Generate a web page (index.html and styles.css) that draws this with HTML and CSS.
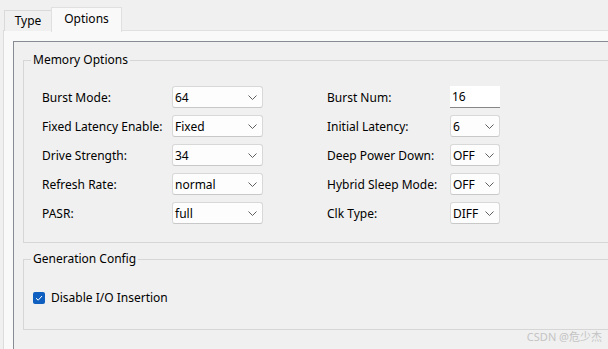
FILE: index.html
```html
<!DOCTYPE html>
<html lang="en">
<head>
    <meta charset="UTF-8">
    <meta name="viewport" content="width=device-width, initial-scale=1.0">
    <title>Options</title>
    <link rel="stylesheet" href="styles.css">
</head>
<body>

    <div class="tabs">
        <div class="tab">Type</div>
        <div class="tab active">Options</div>
    </div>

    <div class="pane">
        <div class="inner">

            <fieldset class="group memory">
                <legend>Memory Options</legend>
                <div class="grid">
                    <span class="label">Burst Mode:</span>
                    <div class="combo wide"><span>64</span><svg width="9" height="5" viewBox="0 0 9 5"><path d="M0.5 0.5 L4.5 4.5 L8.5 0.5" fill="none" stroke="#5f5f5f" stroke-width="1"/></svg></div>
                    <span class="label right">Burst Num:</span>
                    <div class="edit">16</div>

                    <span class="label">Fixed Latency Enable:</span>
                    <div class="combo wide"><span>Fixed</span><svg width="9" height="5" viewBox="0 0 9 5"><path d="M0.5 0.5 L4.5 4.5 L8.5 0.5" fill="none" stroke="#5f5f5f" stroke-width="1"/></svg></div>
                    <span class="label right">Initial Latency:</span>
                    <div class="combo"><span>6</span><svg width="9" height="5" viewBox="0 0 9 5"><path d="M0.5 0.5 L4.5 4.5 L8.5 0.5" fill="none" stroke="#5f5f5f" stroke-width="1"/></svg></div>

                    <span class="label">Drive Strength:</span>
                    <div class="combo wide"><span>34</span><svg width="9" height="5" viewBox="0 0 9 5"><path d="M0.5 0.5 L4.5 4.5 L8.5 0.5" fill="none" stroke="#5f5f5f" stroke-width="1"/></svg></div>
                    <span class="label right">Deep Power Down:</span>
                    <div class="combo"><span>OFF</span><svg width="9" height="5" viewBox="0 0 9 5"><path d="M0.5 0.5 L4.5 4.5 L8.5 0.5" fill="none" stroke="#5f5f5f" stroke-width="1"/></svg></div>

                    <span class="label">Refresh Rate:</span>
                    <div class="combo wide"><span>normal</span><svg width="9" height="5" viewBox="0 0 9 5"><path d="M0.5 0.5 L4.5 4.5 L8.5 0.5" fill="none" stroke="#5f5f5f" stroke-width="1"/></svg></div>
                    <span class="label right">Hybrid Sleep Mode:</span>
                    <div class="combo"><span>OFF</span><svg width="9" height="5" viewBox="0 0 9 5"><path d="M0.5 0.5 L4.5 4.5 L8.5 0.5" fill="none" stroke="#5f5f5f" stroke-width="1"/></svg></div>

                    <span class="label">PASR:</span>
                    <div class="combo wide"><span>full</span><svg width="9" height="5" viewBox="0 0 9 5"><path d="M0.5 0.5 L4.5 4.5 L8.5 0.5" fill="none" stroke="#5f5f5f" stroke-width="1"/></svg></div>
                    <span class="label right">Clk Type:</span>
                    <div class="combo"><span>DIFF</span><svg width="9" height="5" viewBox="0 0 9 5"><path d="M0.5 0.5 L4.5 4.5 L8.5 0.5" fill="none" stroke="#5f5f5f" stroke-width="1"/></svg></div>
                </div>
            </fieldset>

            <fieldset class="group generation">
                <legend>Generation Config</legend>
                <div class="check-row">
                    <span class="checkbox"><svg width="12" height="12" viewBox="0 0 12 12"><path d="M3 6.2 L5.2 8.2 L9 4" fill="none" stroke="#ffffff" stroke-width="1"/></svg></span>
                    <span>Disable I/O Insertion</span>
                </div>
            </fieldset>

        </div>
    </div>

    <div class="watermark">CSDN @危少杰</div>

</body>
</html>
```

FILE: styles.css
```css
* {
    margin: 0;
    padding: 0;
    box-sizing: border-box;
}

body {
    font-family: "Noto Sans", "Noto Sans CJK SC", sans-serif;
    font-size: 12px;
    color: #000;
    background: #f0f0f0;
    width: 608px;
    height: 349px;
    overflow: hidden;
    position: relative;
}


.tabs {
    display: flex;
    align-items: flex-end;
    height: 31px;
    padding-left: 4px;
}

.tab {
    height: 21px;
    width: 48px;
    border: 1px solid #d9d9d9;
    border-bottom: none;
    background: #f0f0f0;
    display: flex;
    align-items: center;
    justify-content: center;
    line-height: 1;
}

.tab.active {
    height: 25px;
    width: 71px;
    background: #f9f9f9;
    border-color: #e0e0e0;
    margin-left: -1px;
    margin-bottom: -1px;
    position: relative;
    padding-bottom: 2px;
}


.pane {
    margin-left: 3px;
    margin-top: -1px;
    height: 319px;
    border-left: 1px solid #dcdcdc;
    border-top: 1px solid #e0e0e0;
    background: #f9f9f9;
    padding: 10px 0 0 9px;
}

.inner {
    height: 100%;
    border-left: 1px solid #868b94;
    border-top: 1px solid #868b94;
    background: #f0f0f0;
    padding: 0 0 0 9px;
    overflow: hidden;
}


.group {
    border: 1px solid #d6d6d6;
    margin-right: -20px;
    padding-left: 0;
}

.group legend {
    margin-left: 7px;
    padding: 0 2px;
    line-height: 16px;
}

.memory {
    margin-top: 10px;
    padding-top: 18px;
    padding-bottom: 18px;
}

.generation {
    margin-top: 8px;
    padding-top: 22px;
    padding-bottom: 23px;
}


.grid {
    display: grid;
    grid-template-columns: 130px 91px 64px 123px 50px;
    grid-auto-rows: 22px;
    row-gap: 7px;
    align-items: center;
    margin-left: 18px;
}

.label.right {
    grid-column: 4;
}

.combo {
    height: 22px;
    width: 50px;
    background: #fdfdfd;
    border: 1px solid #d8d8d8;
    border-bottom-color: #c8c8c8;
    border-radius: 3px;
    display: flex;
    align-items: center;
    justify-content: space-between;
    padding: 0 5px 0 2px;
}

.combo.wide {
    width: 91px;
}

.edit {
    height: 22px;
    width: 50px;
    background: #fff;
    border-bottom: 1px solid #878787;
    display: flex;
    align-items: center;
    padding-left: 2px;
}


.check-row {
    display: flex;
    align-items: center;
    gap: 6px;
    margin-left: 9px;
}

.checkbox {
    width: 12px;
    height: 12px;
    border-radius: 2px;
    background: #0f5fc0;
    display: flex;
}


.watermark {
    position: absolute;
    right: 6px;
    bottom: 5px;
    font-size: 11px;
    color: #c4c4c4;
}
```
